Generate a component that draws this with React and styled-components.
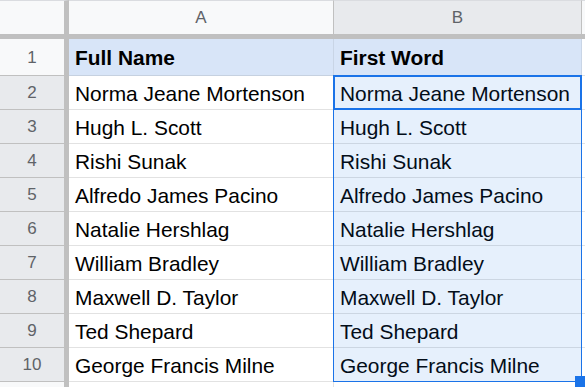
import React from "react";
import styled, { createGlobalStyle } from "styled-components";

const names = [
  "Norma Jeane Mortenson",
  "Hugh L. Scott",
  "Rishi Sunak",
  "Alfredo James Pacino",
  "Natalie Hershlag",
  "William Bradley",
  "Maxwell D. Taylor",
  "Ted Shepard",
  "George Francis Milne",
];

const GlobalStyle = createGlobalStyle`
  html, body {
    margin: 0;
    padding: 0;
    background: #ffffff;
    overflow: hidden;
  }
  body {
    font-family: "Liberation Sans", Arial, sans-serif;
  }
`;

const Sheet = styled.div`
  position: relative;
  display: grid;
  grid-template-columns: 69px 265px 248px 1fr;
  grid-template-rows: 39px 37px repeat(10, 34px);
  width: 585px;
  height: 387px;
  overflow: hidden;
`;

const Corner = styled.div`
  grid-column: 1;
  grid-row: 1;
  box-sizing: border-box;
  background: #f8f9fa;
  border-top: 1px solid #dadce0;
  border-right: 5px solid #c0c0c0;
  border-bottom: 5px solid #c0c0c0;
`;

const ColHeader = styled.div`
  grid-column: ${(props) => props.$col};
  grid-row: 1;
  box-sizing: border-box;
  display: flex;
  align-items: center;
  justify-content: center;
  padding-top: 1px;
  background: ${(props) => (props.$active ? "#e8eaed" : "#f8f9fa")};
  border-top: 1px solid #dadce0;
  border-right: 1px solid #c0c0c0;
  border-bottom: 5px solid #c0c0c0;
  color: #5f6368;
  font-size: 17px;
`;

const RowHeader = styled.div`
  grid-column: 1;
  grid-row: ${(props) => props.$row};
  box-sizing: border-box;
  display: flex;
  align-items: center;
  justify-content: center;
  padding-top: 1px;
  background: ${(props) => (props.$active ? "#e8eaed" : "#f8f9fa")};
  border-right: 5px solid #c0c0c0;
  border-bottom: 1px solid #c0c0c0;
  color: #5f6368;
  font-size: 17px;
`;

const Cell = styled.div`
  grid-column: ${(props) => props.$col};
  grid-row: ${(props) => props.$row};
  box-sizing: border-box;
  display: flex;
  align-items: center;
  padding: 2px 0 0 6px;
  white-space: nowrap;
  overflow: hidden;
  background: ${(props) => (props.$head ? "#d8e5f8" : "#ffffff")};
  border-right: 1px solid ${(props) => (props.$head ? "#c9d5e6" : "#e2e2e2")};
  border-bottom: 1px solid ${(props) => (props.$head ? "#c6d1e0" : "#e2e2e2")};
  color: #000000;
  font-size: 20.9px;
  font-weight: ${(props) => (props.$head ? 700 : 400)};
`;

const Range = styled.div`
  position: relative;
  grid-column: 3;
  grid-row: 3 / 12;
  margin: -1px 0 0 -1px;
  border: 1px solid #1a73e8;
  background: rgba(26, 115, 232, 0.11);
  pointer-events: none;
  z-index: 1;
`;

const ActiveCell = styled.div`
  grid-column: 3;
  grid-row: 3;
  margin: -1px 0 0 -1px;
  border: 2px solid #1a73e8;
  pointer-events: none;
  z-index: 2;
`;

const FillHandle = styled.div`
  position: absolute;
  right: -5px;
  bottom: -6px;
  width: 11px;
  height: 11px;
  background: #1a73e8;
`;

function App() {
  return (
    <>
      <GlobalStyle />
      <Sheet>
        <Corner />
        <ColHeader $col={2}>A</ColHeader>
        <ColHeader $col={3} $active>
          B
        </ColHeader>
        <ColHeader $col={4} />

        <RowHeader $row={2}>1</RowHeader>
        <Cell $row={2} $col={2} $head>
          Full Name
        </Cell>
        <Cell $row={2} $col={3} $head>
          First Word
        </Cell>
        <Cell $row={2} $col={4} />

        {names.map((name, i) => (
          <React.Fragment key={name}>
            <RowHeader $row={i + 3} $active>
              {i + 2}
            </RowHeader>
            <Cell $row={i + 3} $col={2}>
              {name}
            </Cell>
            <Cell $row={i + 3} $col={3}>
              {name}
            </Cell>
            <Cell $row={i + 3} $col={4} />
          </React.Fragment>
        ))}

        <RowHeader $row={12} />
        <Cell $row={12} $col={2} />
        <Cell $row={12} $col={3} />
        <Cell $row={12} $col={4} />

        <Range>
          <FillHandle />
        </Range>
        <ActiveCell />
      </Sheet>
    </>
  );
}

export default App;
